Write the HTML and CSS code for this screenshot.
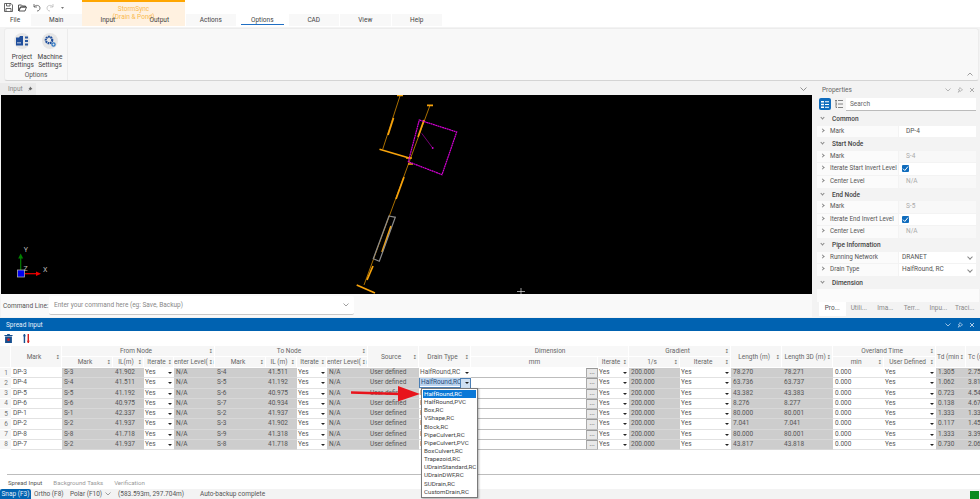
FILE: index.html
```html
<!DOCTYPE html>
<html lang="en">
<head>
    <meta charset="UTF-8">
    <title>StormSync Drain &amp; Pond</title>
    <link rel="stylesheet" href="styles.css">
</head>
<body>
    <div class="app">
        <!-- Quick access + tabs -->
        <div class="title-area">
            <div class="qat">
                <svg width="9" height="9" viewBox="0 0 9 9"><path d="M.5.5h6.5l1.500 1.500v6.500h-8z M2.500.5v2.500h3.500v-2.500 M2 8.500v-3h5v3" fill="none" stroke="#444" stroke-width=".8"/></svg>
                <svg width="9" height="9" viewBox="0 0 9 9"><path d="M.5 2h3l1 1h3v1h-5l-2 4z M1 8l1.500-4h6l-1.500 4z" fill="none" stroke="#444" stroke-width=".9"/></svg>
                <svg width="9" height="9" viewBox="0 0 9 9"><path d="M2 1v3h3 M2 4c1.500-2.500 6-2 6 1 0 2-1.500 3-3 3" fill="none" stroke="#555" stroke-width=".8"/></svg>
                <svg width="9" height="9" viewBox="0 0 9 9"><path d="M7 1v3h-3 M7 4c-1.500-2.500-6-2-6 1 0 2 1.500 3 3 3" fill="none" stroke="#bbb" stroke-width=".8"/></svg>
                <svg width="5" height="9" viewBox="0 0 5 9"><path d="M1 4h3l-1.500 2z" fill="#777"/></svg>
            </div>
            <div class="context-tab"><span>StormSync</span><span>(Drain &amp; Pond)</span></div>
            <div class="tabs">
                <div class="tab file-tab">File</div>
                <div class="tab">Main</div>
                <div class="tab context">Input</div>
                <div class="tab context">Output</div>
                <div class="tab">Actions</div>
                <div class="tab active">Options</div>
                <div class="tab">CAD</div>
                <div class="tab">View</div>
                <div class="tab">Help</div>
            </div>
        </div>

        <!-- Ribbon -->
        <div class="ribbon">
            <div class="ribbon-group">
                <div class="ribbon-buttons">
                    <div class="ribbon-btn">
                        <span class="ribbon-icon">
                            <svg width="12" height="12" viewBox="0 0 12 12"><path d="M0 2.500h3l1-1.500h3v9.500h-7z" fill="#1f4e9c"/><path d="M9 1.500h3v2h-3z M9 5h3v2h-3z M9 8.500h3v2h-3z" fill="#2c5aa0"/><path d="M1.500 7h1v1.500h-1z M3.500 7h1v1.500h-1z" fill="#fff"/></svg>
                        </span>
                        <span>Project<br>Settings</span>
                    </div>
                    <div class="ribbon-btn">
                        <span class="ribbon-icon">
                            <svg width="12" height="12" viewBox="0 0 12 12"><circle cx="5" cy="5" r="3.200" fill="none" stroke="#1f4e9c" stroke-width="2.200" stroke-dasharray="1.700 .6"/><circle cx="9.500" cy="9.500" r="1.600" fill="none" stroke="#2f78c4" stroke-width="1.300"/></svg>
                        </span>
                        <span>Machine<br>Settings</span>
                    </div>
                </div>
                <div class="group-name">Options</div>
            </div>
            <svg class="ribbon-collapse" width="6" height="4" viewBox="0 0 6 4"><path d="M.5 3.500l2.500-2.500 2.500 2.500" fill="none" stroke="#888" stroke-width=".8"/></svg>
        </div>

        <!-- Middle: viewport and properties -->
        <div class="middle">
            <div class="view-column">
                <div class="doc-head">
                    <div class="doc-tab">Input
                        <svg width="6" height="6" viewBox="0 0 6 6"><path d="M3 .5l2.500 2.500-1 .3-1.200 1.200-.3-1-1.800 1.800 1.200-2.200-1-.6 1.300-.6z" fill="#666"/></svg>
                    </div>
                    <svg class="doc-menu" width="7" height="4" viewBox="0 0 7 4"><path d="M.5.5l3 3 3-3" fill="none" stroke="#777" stroke-width=".8"/></svg>
                </div>
                <div class="viewport">
                    <svg class="drawing" viewBox="1 95 811 199" width="811" height="199">
                        <g fill="none" stroke="#a86e00" stroke-width="1">
                            <path d="M400.300 95L382.700 149.300"/>
                            <path d="M430 105.300L364 285"/>
                        </g>
                        <g fill="none" stroke="#f7a30c" stroke-width="1.700">
                            <path d="M397 95.500h6 M427 105.300h6"/>
                            <path d="M379.500 149.300L410 158.300"/>
                            <path d="M393.500 118L388 135"/>
                            <path d="M424 120L418 137 M412 158h-6 M413 164h-5"/>
                            <path d="M404 177L396 199"/>
                            <path d="M391 226L382 252"/>
                            <path d="M373 266L367 280"/>
                            <path d="M356.700 285L375 293"/>
                        </g>
                        <path d="M389 216L395.300 217.300L379.300 261.300L373.300 258.700Z" fill="none" stroke="#8c8c8c" stroke-width="1.200"/>
                        <path d="M419.300 120L456.700 132L442 174.700L408.300 161.700Z" fill="none" stroke="#d400d4" stroke-width="1.200" stroke-dasharray="2 .4"/>
                        <path d="M421.700 133.300L432.700 148" fill="none" stroke="#a000a0" stroke-width=".7"/>
                        <circle cx="432.700" cy="148" r=".9" fill="#d400d4"/>
                        <!-- axes -->
                        <path d="M20.700 271V258" stroke="#008000" stroke-width="1.200"/>
                        <path d="M20.700 253.500l-2.500 5h5z" fill="#008000"/>
                        <path d="M25 273.700H36" stroke="#f00000" stroke-width="1.200"/>
                        <path d="M41 273.700l-5-2.300v4.600z" fill="#f00000"/>
                        <rect x="17.500" y="270" width="7" height="7" fill="#0000f0" stroke="#aaa" stroke-width=".8"/>
                        <text x="23.800" y="252" class="axis-label">Y</text>
                        <text x="23.500" y="271" class="axis-label">Z</text>
                        <text x="43" y="271.800" class="axis-label">X</text>
                        <!-- crosshair -->
                        <path d="M521 288v6 M517 291.500h8" stroke="#ddd" stroke-width=".7"/>
                    </svg>
                </div>
                <div class="command">
                    <span class="command-label">Command Line:</span>
                    <div class="command-input">
                        <span>Enter your command here (eg: Save, Backup)</span>
                        <svg width="6" height="4" viewBox="0 0 6 4"><path d="M.5.500l2.500 2.500 2.500-2.500" fill="none" stroke="#777" stroke-width=".7"/></svg>
                    </div>
                </div>
            </div>

            <!-- Properties -->
            <div class="props">
                <div class="pane-head">
                    <span>Properties</span>
                    <span class="pane-icons dark">
                        <svg width="6" height="6" viewBox="0 0 6 6"><path d="M.5 1.500l2.500 2.500 2.500-2.500" fill="none" stroke="currentColor" stroke-width=".7"/></svg>
                        <svg width="6" height="6" viewBox="0 0 6 6"><path d="M3 .5l2.500 2.500-1 .3-1.200 1.200-.3-1-1.800 1.800 1.200-2.200-1-.6 1.300-.6z" fill="none" stroke="currentColor" stroke-width=".6"/></svg>
                        <svg width="6" height="6" viewBox="0 0 6 6"><path d="M1 1l4 4 M5 1l-4 4" fill="none" stroke="currentColor" stroke-width=".8"/></svg>
                    </span>
                </div>
                <div class="props-tools">
                    <span class="tool-on">
                        <svg width="8" height="7" viewBox="0 0 8 7"><path d="M0 0h3v1.500h-3z M0 2.700h3v1.500h-3z M0 5.400h3v1.500h-3z M4 .3h4v1h-4z M4 3h4v1h-4z M4 5.700h4v1h-4z" fill="#fff"/></svg>
                    </span>
                    <svg class="tool-list" width="8" height="8" viewBox="0 0 8 8"><path d="M0 .5h2 M3 .5h5 M1 .5v7 M1 4h1 M3 4h5 M1 7.500h1 M3 7.500h5" fill="none" stroke="#666" stroke-width=".8"/></svg>
                    <div class="search">Search</div>
                </div>
                <div class="prop-list">
                    <div class="prop-cat"><i class="chev-down"></i>Common</div>
                    <div class="prop-row"><div class="prop-name"><i class="chev"></i>Mark</div><div class="prop-val">DP-4</div></div>
                    <div class="prop-cat"><i class="chev-down"></i>Start Node</div>
                    <div class="prop-row"><div class="prop-name"><i class="chev"></i>Mark</div><div class="prop-val off">S-4</div></div>
                    <div class="prop-row"><div class="prop-name"><i class="chev"></i>Iterate Start Invert Level</div><div class="prop-val"><span class="check"><svg width="7" height="7" viewBox="0 0 7 7"><path d="M1 3.700l1.800 1.800 3.200-4" fill="none" stroke="#fff" stroke-width="1"/></svg></span></div></div>
                    <div class="prop-row"><div class="prop-name"><i class="chev"></i>Center Level</div><div class="prop-val off">N/A</div></div>
                    <div class="prop-cat"><i class="chev-down"></i>End Node</div>
                    <div class="prop-row"><div class="prop-name"><i class="chev"></i>Mark</div><div class="prop-val off">S-5</div></div>
                    <div class="prop-row"><div class="prop-name"><i class="chev"></i>Iterate End Invert Level</div><div class="prop-val"><span class="check"><svg width="7" height="7" viewBox="0 0 7 7"><path d="M1 3.700l1.800 1.800 3.200-4" fill="none" stroke="#fff" stroke-width="1"/></svg></span></div></div>
                    <div class="prop-row"><div class="prop-name"><i class="chev"></i>Center Level</div><div class="prop-val off">N/A</div></div>
                    <div class="prop-cat"><i class="chev-down"></i>Pipe Information</div>
                    <div class="prop-row"><div class="prop-name"><i class="chev"></i>Running Network</div><div class="prop-val pick">DRANET<i class="chev-down wide"></i></div></div>
                    <div class="prop-row"><div class="prop-name"><i class="chev"></i>Drain Type</div><div class="prop-val pick">HalfRound, RC<i class="chev-down wide"></i></div></div>
                    <div class="prop-cat"><i class="chev-down"></i>Dimension</div>
                </div>
                <div class="prop-blank"></div>
                <div class="prop-tabs">
                    <span class="on">Pro...</span><span>Utili...</span><span>Ima...</span><span>Terr...</span><span>Inpu...</span><span>Traci...</span>
                </div>
            </div>
        </div>

        <!-- Spread input -->
        <div class="spread">
            <div class="spread-head">
                <span>Spread Input</span>
                <span class="pane-icons">
                    <svg width="6" height="6" viewBox="0 0 6 6"><path d="M.5 1.500l2.500 2.500 2.500-2.500" fill="none" stroke="currentColor" stroke-width=".7"/></svg>
                    <svg width="6" height="6" viewBox="0 0 6 6"><path d="M3 .5l2.500 2.500-1 .3-1.200 1.200-.3-1-1.800 1.800 1.200-2.200-1-.6 1.300-.6z" fill="none" stroke="currentColor" stroke-width=".6"/></svg>
                    <svg width="6" height="6" viewBox="0 0 6 6"><path d="M1 1l4 4 M5 1l-4 4" fill="none" stroke="currentColor" stroke-width=".8"/></svg>
                </span>
            </div>
            <div class="spread-tools">
                <svg width="9" height="11" viewBox="0 0 10 11"><path d="M3.500.5h3v1h3v1.300h-9v-1.300h3z" fill="#17508f"/><path d="M1.200 3.200h7.600v7.300h-7.600z" fill="#17508f"/><circle cx="5" cy="6.800" r="1.500" fill="#e02020"/></svg>
                <svg width="9" height="11" viewBox="0 0 10 11"><path d="M2.700 .5v10" stroke="#17508f" stroke-width="1.600"/><path d="M7 .5v10" stroke="#d42020" stroke-width="1.600"/><path d="M1 3l1.700-2.500 1.700 2.500z" fill="#17508f"/><path d="M5.300 8l1.700 2.500 1.700-2.500z" fill="#d42020"/></svg>
            </div>
            <div class="table-wrap">
                <table class="grid">
                    <colgroup>
                        <col class="c-num"><col class="c-51"><col class="c-51"><col class="c-31"><col class="c-30"><col class="c-41">
                        <col class="c-51"><col class="c-31"><col class="c-30"><col class="c-41"><col class="c-51"><col class="c-52">
                        <col class="c-dim"><col class="c-31"><col class="c-51"><col class="c-51"><col class="c-51"><col class="c-51">
                        <col class="c-51"><col class="c-52"><col class="c-30"><col class="c-30">
                    </colgroup>
                    <thead>
                        <tr>
                            <th rowspan="2"></th>
                            <th rowspan="2" class="sort">Mark</th>
                            <th colspan="4" class="sort">From Node</th>
                            <th colspan="4" class="sort">To Node</th>
                            <th rowspan="2" class="sort">Source</th>
                            <th rowspan="2" class="sort">Drain Type</th>
                            <th colspan="2" class="plain">Dimension</th>
                            <th colspan="2" class="sort">Gradient</th>
                            <th rowspan="2" class="sort">Length (m)</th>
                            <th rowspan="2" class="sort">Length 3D (m)</th>
                            <th colspan="2" class="sort">Overland Time</th>
                            <th rowspan="2" class="sort td-col">Td (min)</th>
                            <th rowspan="2" class="tc">Tc (r</th>
                        </tr>
                        <tr>
                            <th class="sort">Mark</th><th class="sort">IL(m)</th><th class="sort">Iterate</th><th class="sort clip">enter Level(m</th>
                            <th class="sort">Mark</th><th class="sort">IL (m)</th><th class="sort">Iterate</th><th class="sort clip">enter Level(m</th>
                            <th class="plain">mm</th><th class="sort">Iterate</th>
                            <th class="sort">1/s</th><th class="sort">Iterate</th>
                            <th class="sort">min</th><th class="sort">User Defined</th>
                        </tr>
                    </thead>
                    <tbody>
                        <tr><th>1</th><td>DP-3</td><td class="ro">S-3</td><td class="ro">41.902</td><td class="sel">Yes</td><td class="ro">N/A</td><td class="ro">S-4</td><td class="ro">41.511</td><td class="sel">Yes</td><td class="ro">N/A</td><td class="ro">User defined</td><td class="sel">HalfRound,RC</td><td class="dim"></td><td class="sel">Yes</td><td class="ro">200.000</td><td class="sel">Yes</td><td class="ro">78.270</td><td class="ro">78.271</td><td>0.000</td><td class="sel">Yes</td><td class="ro">1.305</td><td class="ro">2.75</td></tr>
                        <tr><th>2</th><td>DP-4</td><td class="ro">S-4</td><td class="ro">41.511</td><td class="sel">Yes</td><td class="ro">N/A</td><td class="ro">S-5</td><td class="ro">41.192</td><td class="sel">Yes</td><td class="ro">N/A</td><td class="ro">User defined</td><td class="sel open"><span class="picked">HalfRound,RC</span></td><td class="dim"></td><td class="sel">Yes</td><td class="ro">200.000</td><td class="sel">Yes</td><td class="ro">63.736</td><td class="ro">63.737</td><td>0.000</td><td class="sel">Yes</td><td class="ro">1.062</td><td class="ro">3.81</td></tr>
                        <tr><th>3</th><td>DP-5</td><td class="ro">S-5</td><td class="ro">41.192</td><td class="sel">Yes</td><td class="ro">N/A</td><td class="ro">S-6</td><td class="ro">40.975</td><td class="sel">Yes</td><td class="ro">N/A</td><td class="ro">User defined</td><td class="sel">HalfRound,RC</td><td class="dim"></td><td class="sel">Yes</td><td class="ro">200.000</td><td class="sel">Yes</td><td class="ro">43.382</td><td class="ro">43.383</td><td>0.000</td><td class="sel">Yes</td><td class="ro">0.723</td><td class="ro">4.54</td></tr>
                        <tr><th>4</th><td>DP-6</td><td class="ro">S-6</td><td class="ro">40.975</td><td class="sel">Yes</td><td class="ro">N/A</td><td class="ro">S-7</td><td class="ro">40.934</td><td class="sel">Yes</td><td class="ro">N/A</td><td class="ro">User defined</td><td class="sel">HalfRound,RC</td><td class="dim"></td><td class="sel">Yes</td><td class="ro">200.000</td><td class="sel">Yes</td><td class="ro">8.276</td><td class="ro">8.277</td><td>0.000</td><td class="sel">Yes</td><td class="ro">0.138</td><td class="ro">4.67</td></tr>
                        <tr><th>5</th><td>DP-1</td><td class="ro">S-1</td><td class="ro">42.337</td><td class="sel">Yes</td><td class="ro">N/A</td><td class="ro">S-2</td><td class="ro">41.937</td><td class="sel">Yes</td><td class="ro">N/A</td><td class="ro">User defined</td><td class="sel">HalfRound,RC</td><td class="dim"></td><td class="sel">Yes</td><td class="ro">200.000</td><td class="sel">Yes</td><td class="ro">80.000</td><td class="ro">80.001</td><td>0.000</td><td class="sel">Yes</td><td class="ro">1.333</td><td class="ro">1.33</td></tr>
                        <tr><th>6</th><td>DP-2</td><td class="ro">S-2</td><td class="ro">41.937</td><td class="sel">Yes</td><td class="ro">N/A</td><td class="ro">S-3</td><td class="ro">41.902</td><td class="sel">Yes</td><td class="ro">N/A</td><td class="ro">User defined</td><td class="sel">HalfRound,RC</td><td class="dim"></td><td class="sel">Yes</td><td class="ro">200.000</td><td class="sel">Yes</td><td class="ro">7.041</td><td class="ro">7.041</td><td>0.000</td><td class="sel">Yes</td><td class="ro">0.117</td><td class="ro">1.45</td></tr>
                        <tr><th>7</th><td>DP-8</td><td class="ro">S-8</td><td class="ro">41.718</td><td class="sel">Yes</td><td class="ro">N/A</td><td class="ro">S-9</td><td class="ro">41.318</td><td class="sel">Yes</td><td class="ro">N/A</td><td class="ro">User defined</td><td class="sel">HalfRound,RC</td><td class="dim"></td><td class="sel">Yes</td><td class="ro">200.000</td><td class="sel">Yes</td><td class="ro">80.000</td><td class="ro">80.001</td><td>0.000</td><td class="sel">Yes</td><td class="ro">1.333</td><td class="ro">3.39</td></tr>
                        <tr><th>8</th><td>DP-7</td><td class="ro">S-2</td><td class="ro">41.937</td><td class="sel">Yes</td><td class="ro">N/A</td><td class="ro">S-8</td><td class="ro">41.718</td><td class="sel">Yes</td><td class="ro">N/A</td><td class="ro">User defined</td><td class="sel">HalfRound,RC</td><td class="dim"></td><td class="sel">Yes</td><td class="ro">200.000</td><td class="sel">Yes</td><td class="ro">43.817</td><td class="ro">43.818</td><td>0.000</td><td class="sel">Yes</td><td class="ro">0.730</td><td class="ro">2.06</td></tr>
                    </tbody>
                </table>
            </div>
            <div class="bottom-tabs">
                <span class="on">Spread Input</span><span>Background Tasks</span><span>Verification</span>
            </div>
        </div>

        <!-- Status bar -->
        <div class="status">
            <span class="snap">Snap (F3)</span>
            <span class="st-ortho">Ortho (F8)</span>
            <span class="st-polar">Polar (F10)</span>
            <svg class="st-chev" width="6" height="4" viewBox="0 0 6 4"><path d="M.5.500l2.500 2.500 2.500-2.500" fill="none" stroke="#777" stroke-width=".7"/></svg>
            <span class="st-coord">(583.593m, 297.704m)</span>
            <span class="st-msg">Auto-backup complete</span>
            <span class="st-light"></span>
        </div>

        <!-- Open drop down and annotation lie over the table -->
        <ul class="dropdown">
            <li class="hot">HalfRound,RC</li>
            <li>HalfRound,PVC</li>
            <li>Box,RC</li>
            <li>VShape,RC</li>
            <li>Block,RC</li>
            <li>PipeCulvert,RC</li>
            <li>PipeCulvert,PVC</li>
            <li>BoxCulvert,RC</li>
            <li>Trapezoid,RC</li>
            <li>UDrainStandard,RC</li>
            <li>UDrainDWF,RC</li>
            <li>SUDrain,RC</li>
            <li>CustomDrain,RC</li>
        </ul>
        <svg class="red-arrow" width="70" height="16" viewBox="0 0 70 16"><path d="M0 6.500L50 8" stroke="#e8141c" stroke-width="2.400"/><path d="M47 0L69 8L47 15.500z" fill="#e8141c"/></svg>
    </div>
</body>
</html>
```

FILE: styles.css
```css
* {
    box-sizing: border-box;
}
html, body {
    margin: 0;
    padding: 0;
}
body {
    font-family: Roboto, "Noto Sans", sans-serif;
    font-size: 6.5px;
    color: #444;
    background-color: #f3f3f3;
}
svg {
    display: block;
}
.app {
    position: relative;
    width: 980px;
    height: 499px;
    overflow: hidden;
    display: flex;
    flex-direction: column;
}

/* top tabs */
.title-area {
    position: relative;
    height: 27px;
    background-color: #fff;
}
.qat {
    display: flex;
    align-items: center;
    gap: 5px;
    height: 14px;
    padding-left: 4px;
}
.context-tab {
    position: absolute;
    left: 82px;
    top: 0;
    width: 103px;
    height: 26px;
    padding-top: 3px;
    background-color: #fff1e0;
    border-top: 2px solid #ffa600;
    color: #f9b94e;
    text-align: center;
    line-height: 8px;
    display: flex;
    flex-direction: column;
}
.tabs {
    position: absolute;
    left: 0;
    top: 14px;
    display: flex;
    gap: 1px;
    height: 12px;
}
.tab {
    width: 50.500px;
    height: 12px;
    line-height: 12px;
    text-align: center;
    background-color: #f8f8f8;
}
.file-tab {
    width: 30px;
    background-color: #fff;
}
.tab.context {
    background-color: transparent;
    position: relative;
}
.tab.active {
    background-color: #fff;
    position: relative;
}
.tab.active::after {
    content: "";
    position: absolute;
    left: 4px;
    right: 4px;
    bottom: 1px;
    height: 1px;
    background-color: #1f6fc4;
}

/* ribbon */
.ribbon {
    position: relative;
    height: 53px;
    margin: 1px 1px 0 4px;
    background-color: #f8f8f8;
    border: 1px solid #ececec;
    border-bottom: 1px solid #d4d4d4;
    border-radius: 3px;
}
.ribbon-group {
    width: 63px;
    height: 51px;
    border-right: 1px solid #ececec;
    display: flex;
    flex-direction: column;
    align-items: center;
    padding-top: 4px;
}
.ribbon-buttons {
    display: flex;
    gap: 2px;
    height: 38px;
}
.ribbon-btn {
    width: 26px;
    text-align: center;
    line-height: 8px;
    display: flex;
    flex-direction: column;
    align-items: center;
    gap: 4px;
}
.ribbon-icon {
    width: 16px;
    height: 16px;
    border-radius: 50%;
    background-color: #e6e6e6;
    display: flex;
    align-items: center;
    justify-content: center;
}
.group-name {
    line-height: 9px;
    color: #555;
}
.ribbon-collapse {
    position: absolute;
    right: 5px;
    bottom: 4px;
}

/* viewport */
.middle {
    display: flex;
    height: 236px;
    margin-top: 1px;
}
.view-column {
    width: 812px;
    display: flex;
    flex-direction: column;
}
.doc-head {
    height: 13px;
    display: flex;
    align-items: center;
    justify-content: space-between;
    padding-right: 5px;
}
.doc-tab {
    display: flex;
    align-items: center;
    gap: 4px;
    height: 12px;
    width: 36px;
    padding-left: 8px;
    background-color: #ebebeb;
    color: #888;
}
.viewport {
    height: 199px;
    margin-left: 1px;
    background-color: #000;
    overflow: hidden;
}
.axis-label {
    font-size: 7px;
    fill: #bbb;
}
.command {
    height: 23px;
    display: flex;
    align-items: center;
    background-color: #f9f9f9;
    padding-left: 2px;
    margin-left: 1px;
}
.command-label {
    width: 46px;
    color: #555;
    white-space: nowrap;
}
.command-input {
    width: 305px;
    height: 19px;
    padding: 0 5px;
    display: flex;
    align-items: center;
    justify-content: space-between;
    background-color: #fff;
    border-bottom: 1px solid #c8c8c8;
    border-radius: 2px;
    color: #888;
}

/* properties */
.props {
    width: 163px;
    margin-left: 5px;
    display: flex;
    flex-direction: column;
    position: relative;
}
.pane-head {
    height: 15px;
    display: flex;
    align-items: center;
    justify-content: space-between;
    padding: 0 5px;
    color: #666;
}
.pane-icons {
    display: flex;
    gap: 6px;
    color: #dbe9f7;
}
.pane-icons.dark {
    color: #999;
}
.props-tools {
    height: 14px;
    display: flex;
    align-items: center;
    padding-left: 2px;
}
.tool-on {
    width: 12px;
    height: 12px;
    border-radius: 2px;
    background-color: #0f6cbd;
    display: flex;
    align-items: center;
    justify-content: center;
}
.tool-list {
    margin-left: 4px;
}
.search {
    width: 130px;
    height: 13px;
    margin-left: 3px;
    padding-left: 4px;
    line-height: 12px;
    background-color: #fff;
    border-bottom: 1px solid #bbb;
    color: #666;
}
.prop-list {
    margin-top: 2px;
    padding-right: 4px;
    color: #555;
}
.prop-cat {
    height: 12.600px;
    line-height: 12.600px;
    padding-left: 3px;
    font-weight: 500;
    color: #444;
}
.prop-row {
    height: 12.600px;
    line-height: 11.600px;
    display: flex;
    gap: 1px;
    border-bottom: 1px solid #f3f3f3;
}
.prop-name {
    width: 81px;
    padding-left: 3px;
    font-size: 6.300px;
    background-color: #fbfbfb;
    white-space: nowrap;
    overflow: hidden;
}
.prop-name .chev {
    margin-right: 6px;
}
.prop-val {
    flex: 1;
    padding-left: 7px;
    background-color: #fff;
}
.prop-val.off {
    background-color: #f8f8f8;
    color: #aaa;
}
.prop-val.pick {
    padding-left: 3px;
    display: flex;
    justify-content: space-between;
    align-items: center;
    padding-right: 4px;
}
.chev, .chev-down {
    display: inline-block;
    width: 3px;
    height: 3px;
    margin: 0 8px 1px 1px;
    border-right: .7px solid #888;
    border-bottom: .7px solid #888;
}
.chev {
    transform: rotate(-45deg);
}
.chev-down {
    transform: rotate(45deg);
    margin-bottom: 2px;
}
.chev-down.wide {
    width: 4px;
    height: 4px;
    margin: 0;
}
.check {
    display: block;
    width: 7px;
    height: 7px;
    margin: 2px 0 0 -4px;
    border-radius: 1px;
    background-color: #0f6cbd;
}
.prop-blank {
    height: 13px;
    margin-right: 1px;
    background-color: #fbfbfb;
}
.prop-tabs {
    height: 14px;
    display: flex;
    color: #888;
    padding-left: 2px;
}
.prop-tabs span {
    width: 26.500px;
    line-height: 13px;
    text-align: center;
}
.prop-tabs .on {
    background-color: #fff;
    color: #555;
}

/* spread input */
.spread {
    height: 171px;
    display: flex;
    flex-direction: column;
    background-color: #fff;
}
.spread-head {
    height: 13px;
    display: flex;
    align-items: center;
    justify-content: space-between;
    padding: 0 5px 0 6px;
    background-color: #0062b1;
    color: #e6f0fa;
}
.spread-tools {
    height: 15px;
    display: flex;
    align-items: center;
    gap: 9px;
    padding-left: 4px;
}
.table-wrap {
    height: 128px;
    overflow: hidden;
}
.grid {
    table-layout: fixed;
    border-collapse: separate;
    border-spacing: 0;
    width: 992px;
}
.c-num { width: 11px; }
.c-30 { width: 30px; }
.c-31 { width: 31px; }
.c-41 { width: 41px; }
.c-51 { width: 51px; }
.c-52 { width: 52px; }
.c-dim { width: 127px; }
.grid th, .grid td {
    padding: 0 0 0 1px;
    overflow: hidden;
    white-space: nowrap;
    font-weight: 400;
}
.grid thead th {
    height: 10.500px;
    line-height: 10px;
    text-align: center;
    color: #666;
    background-color: #f6f6f6;
    border-right: 1px solid #fff;
    border-bottom: 1px solid #fff;
    position: relative;
}
.grid thead th.sort {
    padding-right: 5px;
}
.grid thead th.sort::after {
    content: "\2195";
    position: absolute;
    right: 1px;
    top: 50%;
    margin-top: -5px;
    font-family: "DejaVu Sans", sans-serif;
    font-size: 5.500px;
    line-height: 10px;
    color: #666;
    background-color: #f6f6f6;
}
.grid thead th.clip {
    text-align: left;
    padding: 0;
}
.grid thead th.td-col {
    text-align: left;
    padding: 0 0 0 1px;
}
.grid thead th.tc {
    text-align: left;
    padding-left: 2px;
}
.grid thead th.plain {
    background-color: #f8f8f8;
}
.grid tbody th {
    height: 10.250px;
    text-align: center;
    color: #777;
    background-color: #f6f6f6;
    border-bottom: 1px solid #fff;
}
.grid tbody td {
    height: 10.250px;
    line-height: 8px;
    padding: 0 0 1px 2px;
    color: #555;
    background-color: #fff;
    border-bottom: 1px solid #e2e2e2;
}
.grid tbody td.ro {
    background-color: #cdcdcd;
    border-bottom-color: #d8d8d8;
}
.grid tbody td.sel {
    position: relative;
    padding-left: 1px;
}
.grid tbody td.sel::after {
    content: "";
    position: absolute;
    right: 2px;
    top: 4px;
    border-left: 2px solid transparent;
    border-right: 2px solid transparent;
    border-top: 2.500px solid #222;
}
.grid tbody td.dim {
    position: relative;
    border-bottom: 1.500px solid #bdbdbd;
}
.grid tbody td.dim::after {
    content: "...";
    position: absolute;
    right: 0;
    top: 0;
    width: 10px;
    height: 9px;
    line-height: 6px;
    text-align: center;
    background-color: #e8e8e8;
    border: 1px solid #aaa;
    border-top-color: #999;
}
.grid tbody td.open {
    box-shadow: inset 0 0 0 1px #4b7fb5;
}
.grid tbody td.open::before {
    content: "";
    position: absolute;
    right: 0;
    top: 0;
    width: 9px;
    height: 100%;
    background-color: #cfe0f2;
    border: 1px solid #4b7fb5;
}
.picked {
    background-color: #b9d3f0;
    padding: 0 1px;
    color: #2a4d77;
}
.bottom-tabs {
    height: 15px;
    margin-left: 7px;
    padding-left: 1px;
    display: flex;
    border-top: 1px solid #bdbdbd;
    font-size: 6.100px;
    color: #999;
}
.bottom-tabs span {
    line-height: 15px;
    margin-right: 11px;
}
.bottom-tabs .on {
    color: #555;
}

/* status bar */
.status {
    position: relative;
    height: 10px;
    line-height: 10px;
    display: flex;
    align-items: center;
    background-color: #f3f3f3;
    color: #555;
}
.snap {
    width: 31px;
    height: 10px;
    text-align: center;
    background-color: #0063b1;
    color: #e6f0fa;
    border-radius: 2px 2px 0 0;
}
.st-ortho { margin-left: 3px; width: 36px; }
.st-polar { width: 35px; }
.st-chev { margin-right: 7px; }
.st-coord { width: 82px; }
.st-light {
    position: absolute;
    right: 1px;
    top: 2px;
    width: 9px;
    height: 8px;
    background-color: #0a8a1e;
}

/* overlays */
.dropdown {
    position: absolute;
    left: 421px;
    top: 388px;
    width: 57px;
    margin: 0;
    padding: 1px;
    list-style: none;
    font-size: 6.200px;
    background-color: #fff;
    border: 1px solid #7a7a7a;
    box-shadow: 1px 1px 2px rgba(0, 0, 0, .3);
    color: #444;
}
.dropdown li {
    height: 8px;
    line-height: 8px;
    padding-left: 1px;
    margin-bottom: .150px;
    white-space: nowrap;
}
.dropdown .hot {
    background-color: #0a78d7;
    color: #fff;
}
.red-arrow {
    position: absolute;
    left: 351px;
    top: 386px;
}
```
